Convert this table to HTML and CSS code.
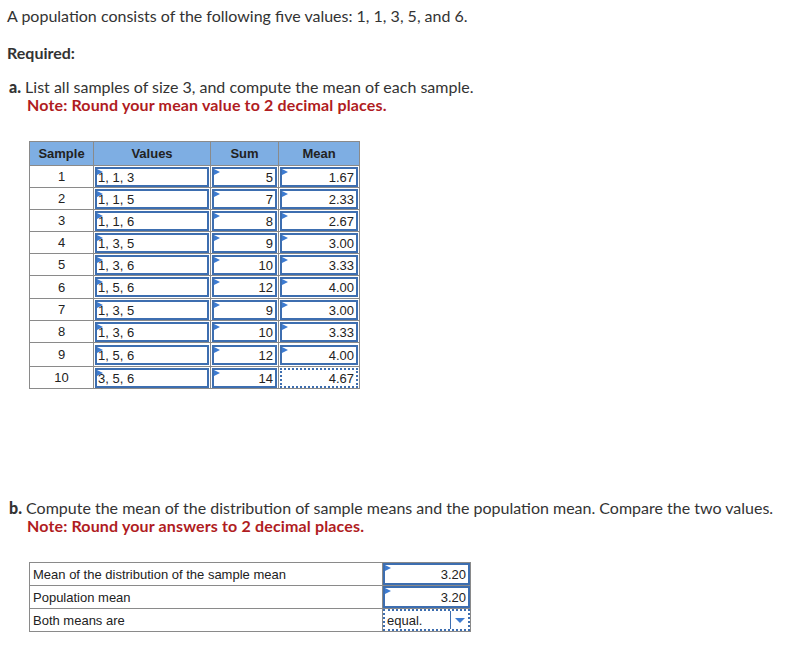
FILE: index.html
```html
<!DOCTYPE html>
<html>
<head>
<meta charset="utf-8">
<link rel="stylesheet" href="styles.css">
</head>
<body>
<div class="page">
  <p class="intro">A population consists of the following five values: 1, 1, 3, 5, and 6.</p>
  <p class="required">Required:</p>
  <div class="part part-a">
    <p class="q"><b>a.</b> List all samples of size 3, and compute the mean of each sample.</p>
    <p class="note">Note: Round your mean value to 2 decimal places.</p>
  </div>
  <table class="grid">
    <thead>
      <tr><th class="c-sample">Sample</th><th class="c-values">Values</th><th class="c-sum">Sum</th><th class="c-mean">Mean</th></tr>
    </thead>
    <tbody>
      <tr><td class="num">1</td><td><div class="inp left">1, 1, 3</div></td><td><div class="inp">5</div></td><td><div class="inp">1.67</div></td></tr>
      <tr><td class="num">2</td><td><div class="inp left">1, 1, 5</div></td><td><div class="inp">7</div></td><td><div class="inp">2.33</div></td></tr>
      <tr><td class="num">3</td><td><div class="inp left">1, 1, 6</div></td><td><div class="inp">8</div></td><td><div class="inp">2.67</div></td></tr>
      <tr><td class="num">4</td><td><div class="inp left">1, 3, 5</div></td><td><div class="inp">9</div></td><td><div class="inp">3.00</div></td></tr>
      <tr><td class="num">5</td><td><div class="inp left">1, 3, 6</div></td><td><div class="inp">10</div></td><td><div class="inp">3.33</div></td></tr>
      <tr class="tall"><td class="num">6</td><td><div class="inp left">1, 5, 6</div></td><td><div class="inp">12</div></td><td><div class="inp">4.00</div></td></tr>
      <tr><td class="num">7</td><td><div class="inp left">1, 3, 5</div></td><td><div class="inp">9</div></td><td><div class="inp">3.00</div></td></tr>
      <tr><td class="num">8</td><td><div class="inp left">1, 3, 6</div></td><td><div class="inp">10</div></td><td><div class="inp">3.33</div></td></tr>
      <tr class="taller"><td class="num">9</td><td><div class="inp left">1, 5, 6</div></td><td><div class="inp">12</div></td><td><div class="inp">4.00</div></td></tr>
      <tr><td class="num">10</td><td><div class="inp left">3, 5, 6</div></td><td><div class="inp">14</div></td><td><div class="inp focus">4.67</div></td></tr>
    </tbody>
  </table>
  <div class="part part-b">
    <p class="q"><b>b.</b> Compute the mean of the distribution of sample means and the population mean. Compare the two values.</p>
    <p class="note">Note: Round your answers to 2 decimal places.</p>
  </div>
  <table class="grid2">
    <tr><td class="label">Mean of the distribution of the sample mean</td><td class="val"><div class="inp">3.20</div></td></tr>
    <tr><td class="label">Population mean</td><td class="val"><div class="inp">3.20</div></td></tr>
    <tr><td class="label">Both means are</td><td class="val"><div class="select"><span class="sel-text">equal.</span><span class="sel-arrow"></span></div></td></tr>
  </table>
</div>
</body>
</html>
```
FILE: styles.css
```css
html, body {
  margin: 0;
  padding: 0;
  background: #fff;
}
.page {
  padding: 6px 0 0 7px;
  font-family: Lato, "Open Sans", sans-serif;
  font-size: 16px;
  color: #333;
}
p { margin: 0; }
.intro { line-height: 20px; }
.required {
  line-height: 20px;
  margin-top: 17px;
  font-weight: bold;
}
.part { line-height: 18px; margin-left: 2px; }
.part-a { margin-top: 15px; }
.part .q b { font-weight: 900; }
.note {
  color: #b01c22;
  font-weight: bold;
  letter-spacing: 0.15px;
  margin-left: 18px;
}
.grid {
  margin: 27px 0 0 22px;
  border-collapse: collapse;
  font-family: "Liberation Sans", Arial, sans-serif;
  font-size: 13px;
  color: #222;
}
.grid th, .grid td {
  border: 1px solid #8a8a8a;
  padding: 0;
}
.grid th {
  background: #7eaee3;
  height: 23px;
  font-weight: bold;
  text-align: center;
}
.c-sample { width: 63px; }
.c-values { width: 116px; }
.c-sum { width: 67px; }
.c-mean { width: 80px; }
.grid td { height: 21px; padding: 0 1px; }
.grid tr.tall td { height: 22px; }
.grid tr.taller td { height: 23px; }
.grid td.num { text-align: center; }
.inp {
  position: relative;
  box-sizing: border-box;
  height: 20px;
  border: 2px solid #3d6eb0;
  text-align: right;
  padding: 0 2px;
  line-height: 17px;
  font-family: "Liberation Sans", Arial, sans-serif;
  font-size: 13px;
  color: #222;
}
.inp.left { text-align: left; padding-left: 1px; }
.inp::before {
  content: "";
  position: absolute;
  left: 0;
  top: 0;
  border-left: 6px solid #3d7bd0;
  border-top: 3px solid transparent;
  border-bottom: 3px solid transparent;
}
.inp.focus { border: 2px dotted #3d6eb0; }
.inp.focus::before { display: none; }

.part-b { margin-top: 110px; }
.grid2 {
  margin: 27px 0 0 22px;
  border-collapse: collapse;
  font-family: "Liberation Sans", Arial, sans-serif;
  font-size: 13px;
  color: #222;
}
.grid2 td {
  border: 1px solid #8a8a8a;
  height: 22px;
  padding: 0;
}
.grid2 td.label { width: 349px; padding-left: 3px; }
.grid2 td.val { width: 87px; }
.grid2 .inp { height: 22px; line-height: 19px; }
.select {
  box-sizing: border-box;
  height: 22px;
  border: 2px dotted #3d6eb0;
  display: flex;
  align-items: center;
}
.sel-text { flex: 1; padding-left: 2px; }
.sel-arrow {
  width: 17px;
  align-self: stretch;
  border-left: 1px solid #3d6eb0;
  display: flex;
  align-items: center;
  justify-content: center;
}
.sel-arrow::after {
  content: "";
  border-top: 5px solid #3d7bd0;
  border-left: 5px solid transparent;
  border-right: 5px solid transparent;
}
```
